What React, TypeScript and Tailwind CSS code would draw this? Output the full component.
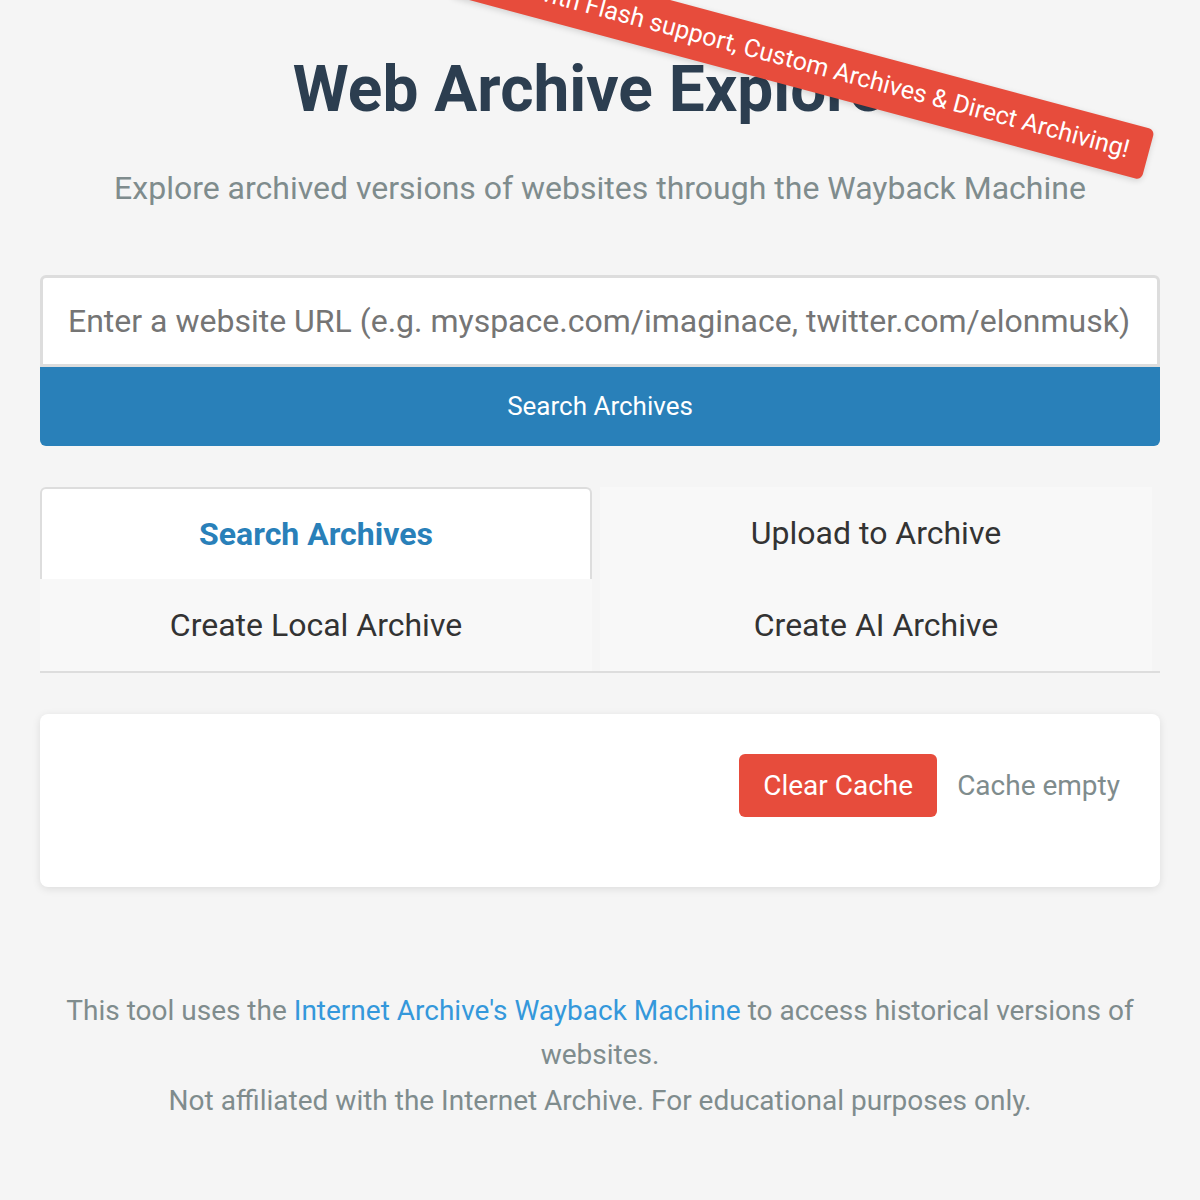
import React, { useState } from "react";

const tabs = ["Search Archives", "Upload to Archive", "Create Local Archive", "Create AI Archive"];

export default function App() {
  const [url, setUrl] = useState("");
  const [active, setActive] = useState(0);

  return (
    <div className="relative min-h-screen overflow-hidden bg-[#f5f5f5] font-['Roboto',sans-serif]">
      {/* Announcement ribbon */}
      <div className="absolute right-[52px] top-[129px] z-10 flex h-[52px] origin-right rotate-[15deg] items-center whitespace-nowrap rounded-[6px] bg-[#e74c3c] pl-6 pr-5 text-[25px] text-white shadow-[0_2px_6px_rgba(0,0,0,0.15)]">
        Now with Flash support, Custom Archives &amp; Direct Archiving!
      </div>

      <div className="px-10">
        {/* Header */}
        <h1 className="mt-[52px] text-center text-[64px] font-bold leading-[75px] text-[#2c3e50]">
          Web Archive Explorer
        </h1>
        <p className="mt-[42px] text-center text-[32px] leading-[38px] text-[#7f8c8d]">
          Explore archived versions of websites through the Wayback Machine
        </p>

        {/* Search form */}
        <div className="mt-[68px]">
          <input
            value={url}
            onChange={(e) => setUrl(e.target.value)}
            placeholder="Enter a website URL (e.g. myspace.com/imaginace, twitter.com/elonmusk)"
            className="block h-[92px] w-full rounded-t-[6px] border-[3px] border-[#ddd] bg-white px-[25px] text-[32px] text-[#333] outline-none placeholder:text-[#757575]"
          />
          <button className="block h-[79px] w-full rounded-b-[6px] bg-[#2980b9] text-[26px] text-white">
            Search Archives
          </button>
        </div>

        {/* Tabs */}
        <div className="mt-[41px] grid grid-cols-2 gap-x-2 border-b-2 border-[#ddd] pr-2">
          {tabs.map((tab, i) => (
            <button
              key={tab}
              onClick={() => setActive(i)}
              className={
                i === active
                  ? "flex h-[92px] items-center justify-center rounded-t-[6px] border-2 border-b-0 border-[#ddd] bg-white text-[32px] font-bold text-[#2980b9]"
                  : "flex h-[92px] items-center justify-center bg-[#f8f8f8] text-[32px] text-[#333]"
              }
            >
              {tab}
            </button>
          ))}
        </div>

        {/* Cache panel */}
        <div className="mt-[41px] flex items-center justify-end gap-5 rounded-[8px] bg-white px-10 pb-[70px] pt-10 shadow-[0_2px_8px_rgba(0,0,0,0.1)]">
          <button className="h-[63px] rounded-[6px] bg-[#e74c3c] px-6 text-[28px] text-white">Clear Cache</button>
          <span className="text-[28px] text-[#7f8c8d]">Cache empty</span>
        </div>

        {/* Footer */}
        <footer className="mt-[102px] text-center text-[28px] leading-[44px] text-[#7f8c8d]">
          <p>
            This tool uses the{" "}
            <a href="#" className="text-[#3498db]">
              Internet Archive's Wayback Machine
            </a>{" "}
            to access historical versions of websites.
          </p>
          <p className="mt-[2px]">Not affiliated with the Internet Archive. For educational purposes only.</p>
        </footer>
      </div>
    </div>
  );
}
